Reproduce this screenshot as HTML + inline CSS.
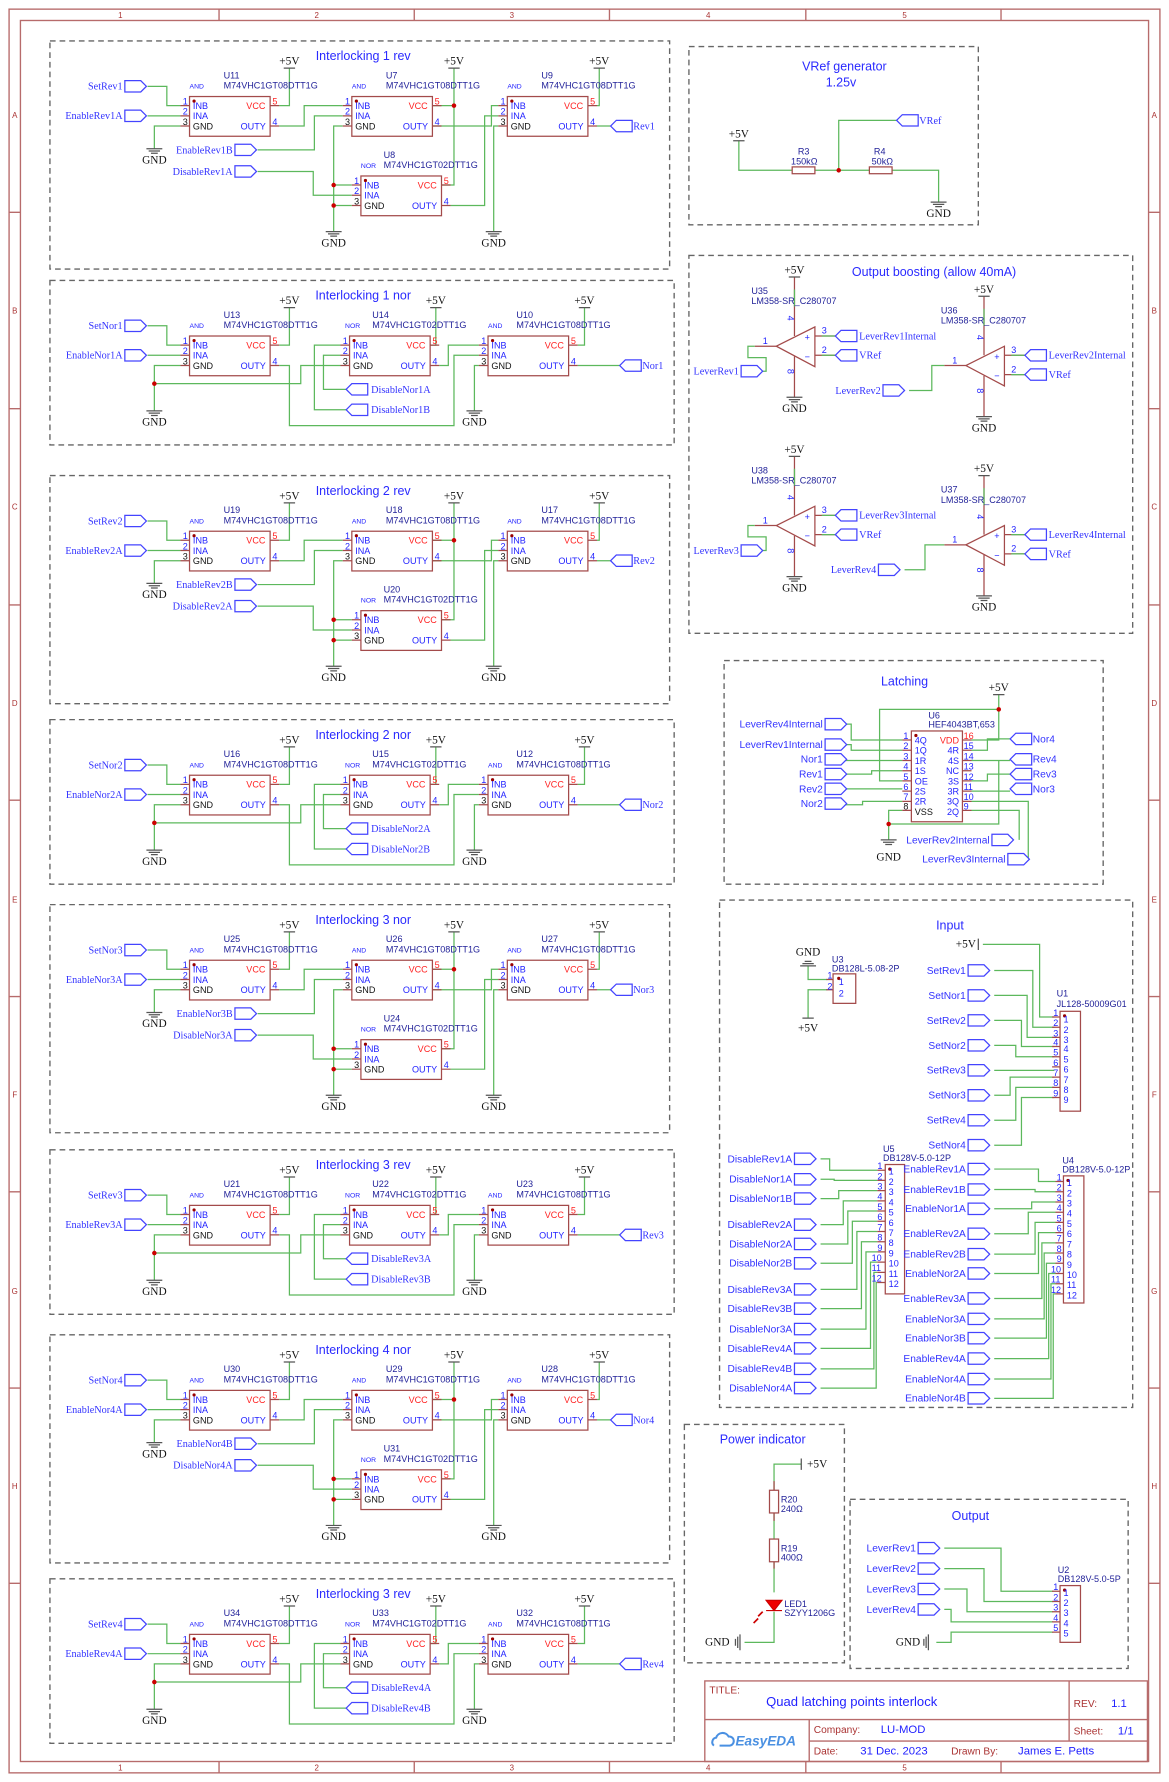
<!DOCTYPE html>
<html><head><meta charset="utf-8"><style>
html,body{margin:0;padding:0;background:#fff}
svg{display:block}
.w{fill:none;stroke:#5cb85c;stroke-width:1.1}
.bx{fill:#fff;stroke:#a34a4a;stroke-width:1.1}
.pn{fill:none;stroke:#a34a4a;stroke-width:1.1}
.ds{fill:none;stroke:#666;stroke-width:1.2;stroke-dasharray:5 3.5}
.fl{fill:#fff;stroke:#44f;stroke-width:1.1}
.sy{fill:none;stroke:#555;stroke-width:1.1}
text{font-family:"Liberation Sans",sans-serif}
.n{font-size:8px;fill:#22f}
.f{font-size:8px;fill:#22f}
.p{font-size:8px;fill:#229}
.t{font-size:6px;fill:#22f}
.ti{font-size:11px;fill:#2a2aff;text-anchor:middle}
.lb{font-family:"Liberation Serif",serif;font-size:9px;fill:#33f}
.e{text-anchor:end}
.m{text-anchor:middle}
.pw{font-family:"Liberation Serif",serif;font-size:10px;fill:#111;text-anchor:middle}
.dt{fill:#c00}
.fr{fill:none;stroke:#b76b6b;stroke-width:1.2}
.rl{font-size:7px;fill:#a33;text-anchor:middle}
.tb{font-size:9px;fill:#a33}
.tv{font-size:10px;fill:#22f}
text.r,g text.r{fill:#f22}
text.k,g text.k{fill:#111}
</style></head><body>
<svg width="1169" height="1782" viewBox="0 0 1030 1570" xmlns="http://www.w3.org/2000/svg">
<!-- frame -->
<rect class="fr" x="8" y="8" width="1014" height="1554"/>
<rect class="fr" x="18" y="18" width="994" height="1534"/>
<path class="fr" d="M193 8V18M365 8V18M537 8V18M710 8V18M882 8V18M193 1552V1562M365 1552V1562M537 1552V1562M710 1552V1562M882 1552V1562M8 187H18M8 360H18M8 533H18M8 705H18M8 878H18M8 1050H18M8 1223H18M8 1395H18M1012 187H1022M1012 360H1022M1012 533H1022M1012 705H1022M1012 878H1022M1012 1050H1022M1012 1223H1022M1012 1395H1022"/>
<g class="rl"><text x="106" y="16">1</text><text x="279" y="16">2</text><text x="451" y="16">3</text><text x="624" y="16">4</text><text x="797" y="16">5</text>
<text x="106" y="1560">1</text><text x="279" y="1560">2</text><text x="451" y="1560">3</text><text x="624" y="1560">4</text><text x="797" y="1560">5</text>
<text x="13" y="104">A</text><text x="13" y="276">B</text><text x="13" y="449">C</text><text x="13" y="622">D</text><text x="13" y="795">E</text><text x="13" y="967">F</text><text x="13" y="1140">G</text><text x="13" y="1312">H</text>
<text x="1017" y="104">A</text><text x="1017" y="276">B</text><text x="1017" y="449">C</text><text x="1017" y="622">D</text><text x="1017" y="795">E</text><text x="1017" y="967">F</text><text x="1017" y="1140">G</text><text x="1017" y="1312">H</text></g>

<!-- ========== REV BLOCK 1 ========== -->
<g transform="translate(0,36)">
<rect class="ds" x="44" y="0" width="546" height="201"/>
<text class="ti" x="320" y="17">Interlocking 1 rev</text>
<path class="w" d="M130 40H147V57H159M130 66H159M159 75H136V95M246 57H255V24M246 75H268V57H302M227 96H277V66H302M302 75H294V168M381 57H400V24M400 57V127H389M381 75H433V57H439M227 115H276V136H310M310 127H294M310 145H294M397 145H427V66H439M439 75H435V168M526 57H528V24M526 75H538"/>
<circle class="dt" cx="400" cy="57" r="2"/><circle class="dt" cx="294" cy="127" r="2"/><circle class="dt" cx="294" cy="145" r="2"/>
<path class="fl" d="M110 35h14l5 5l-5 5h-14zM110 61h14l5 5l-5 5h-14zM207 91h14l5 5l-5 5h-14zM207 110h14l5 5l-5 5h-14zM538 75l5-5h14v10h-14z"/>
<text class="lb e" x="108" y="43">SetRev1</text><text class="lb e" x="108" y="69">EnableRev1A</text><text class="lb e" x="205" y="99">EnableRev1B</text><text class="lb e" x="205" y="118">DisableRev1A</text><text class="lb" x="558" y="78">Rev1</text>
<path class="sy" d="M250 24h10M395 24h10M523 24h10M129 95h14M131 97h10M133 99h6M287 168h14M289 170h10M291 172h6M428 168h14M430 170h10M432 172h6"/>
<text class="pw" x="255" y="21">+5V</text><text class="pw" x="400" y="21">+5V</text><text class="pw" x="528" y="21">+5V</text>
<text class="pw" x="136" y="108">GND</text><text class="pw" x="294" y="181">GND</text><text class="pw" x="435" y="181">GND</text>
<g transform="translate(167,49)"><rect class="bx" width="71" height="35"/><circle cx="4" cy="4" r="1.4" fill="#900"/><path class="pn" d="M-8 8h8M-8 17h8M-8 26h8M71 8h8M71 26h8"/><text class="n" x="-6" y="7">1</text><text class="n" x="-6" y="16">2</text><text class="n k" x="-6" y="25">3</text><text class="n r" x="73" y="7">5</text><text class="n" x="73" y="25">4</text><text class="f" x="3" y="11">INB</text><text class="f" x="3" y="20">INA</text><text class="f k" x="3" y="29">GND</text><text class="f r" x="50" y="11">VCC</text><text class="f" x="45" y="29">OUTY</text><text class="t" x="0" y="-7">AND</text><text class="p" x="30" y="-16">U11</text><text class="p" x="30" y="-7">M74VHC1GT08DTT1G</text></g>
<g transform="translate(310,49)"><rect class="bx" width="71" height="35"/><circle cx="4" cy="4" r="1.4" fill="#900"/><path class="pn" d="M-8 8h8M-8 17h8M-8 26h8M71 8h8M71 26h8"/><text class="n" x="-6" y="7">1</text><text class="n" x="-6" y="16">2</text><text class="n k" x="-6" y="25">3</text><text class="n r" x="73" y="7">5</text><text class="n" x="73" y="25">4</text><text class="f" x="3" y="11">INB</text><text class="f" x="3" y="20">INA</text><text class="f k" x="3" y="29">GND</text><text class="f r" x="50" y="11">VCC</text><text class="f" x="45" y="29">OUTY</text><text class="t" x="0" y="-7">AND</text><text class="p" x="30" y="-16">U7</text><text class="p" x="30" y="-7">M74VHC1GT08DTT1G</text></g>
<g transform="translate(447,49)"><rect class="bx" width="71" height="35"/><circle cx="4" cy="4" r="1.4" fill="#900"/><path class="pn" d="M-8 8h8M-8 17h8M-8 26h8M71 8h8M71 26h8"/><text class="n" x="-6" y="7">1</text><text class="n" x="-6" y="16">2</text><text class="n k" x="-6" y="25">3</text><text class="n r" x="73" y="7">5</text><text class="n" x="73" y="25">4</text><text class="f" x="3" y="11">INB</text><text class="f" x="3" y="20">INA</text><text class="f k" x="3" y="29">GND</text><text class="f r" x="50" y="11">VCC</text><text class="f" x="45" y="29">OUTY</text><text class="t" x="0" y="-7">AND</text><text class="p" x="30" y="-16">U9</text><text class="p" x="30" y="-7">M74VHC1GT08DTT1G</text></g>
<g transform="translate(318,119)"><rect class="bx" width="71" height="35"/><circle cx="4" cy="4" r="1.4" fill="#900"/><path class="pn" d="M-8 8h8M-8 17h8M-8 26h8M71 8h8M71 26h8"/><text class="n" x="-6" y="7">1</text><text class="n" x="-6" y="16">2</text><text class="n k" x="-6" y="25">3</text><text class="n r" x="73" y="7">5</text><text class="n" x="73" y="25">4</text><text class="f" x="3" y="11">INB</text><text class="f" x="3" y="20">INA</text><text class="f k" x="3" y="29">GND</text><text class="f r" x="50" y="11">VCC</text><text class="f" x="45" y="29">OUTY</text><text class="t" x="0" y="-7">NOR</text><text class="p" x="20" y="-16">U8</text><text class="p" x="20" y="-7">M74VHC1GT02DTT1G</text></g>
</g>

<!-- ========== NOR BLOCK 2 ========== -->
<g transform="translate(0,247)">
<rect class="ds" x="44" y="0" width="550" height="145"/>
<text class="ti" x="320" y="17">Interlocking 1 nor</text>
<path class="w" d="M130 40H147V57H159M130 66H159M159 75H136V115M136 91H265V75H300M246 57H255V24M246 75H255V128H400V66H422M300 57H277V114H305M300 66H285V96H305M379 57H384V24M387 75H395V57H422M422 75H418V115M509 57H515V24M509 75H546"/>
<circle class="dt" cx="136" cy="91" r="2"/>
<path class="fl" d="M110 35h14l5 5l-5 5h-14zM110 61h14l5 5l-5 5h-14zM305 96l5-5h14v10h-14zM305 114l5-5h14v10h-14zM546 75l5-5h14v10h-14z"/>
<text class="lb e" x="108" y="43">SetNor1</text><text class="lb e" x="108" y="69">EnableNor1A</text><text class="lb" x="327" y="99">DisableNor1A</text><text class="lb" x="327" y="117">DisableNor1B</text><text class="lb" x="566" y="78">Nor1</text>
<path class="sy" d="M250 24h10M379 24h10M510 24h10M129 115h14M131 117h10M133 119h6M411 115h14M413 117h10M415 119h6"/>
<text class="pw" x="255" y="21">+5V</text><text class="pw" x="384" y="21">+5V</text><text class="pw" x="515" y="21">+5V</text>
<text class="pw" x="136" y="128">GND</text><text class="pw" x="418" y="128">GND</text>
<g transform="translate(167,49)"><rect class="bx" width="71" height="35"/><circle cx="4" cy="4" r="1.4" fill="#900"/><path class="pn" d="M-8 8h8M-8 17h8M-8 26h8M71 8h8M71 26h8"/><text class="n" x="-6" y="7">1</text><text class="n" x="-6" y="16">2</text><text class="n k" x="-6" y="25">3</text><text class="n r" x="73" y="7">5</text><text class="n" x="73" y="25">4</text><text class="f" x="3" y="11">INB</text><text class="f" x="3" y="20">INA</text><text class="f k" x="3" y="29">GND</text><text class="f r" x="50" y="11">VCC</text><text class="f" x="45" y="29">OUTY</text><text class="t" x="0" y="-7">AND</text><text class="p" x="30" y="-16">U13</text><text class="p" x="30" y="-7">M74VHC1GT08DTT1G</text></g>
<g transform="translate(308,49)"><rect class="bx" width="71" height="35"/><circle cx="4" cy="4" r="1.4" fill="#900"/><path class="pn" d="M-8 8h8M-8 17h8M-8 26h8M71 8h8M71 26h8"/><text class="n" x="-6" y="7">1</text><text class="n" x="-6" y="16">2</text><text class="n k" x="-6" y="25">3</text><text class="n r" x="73" y="7">5</text><text class="n" x="73" y="25">4</text><text class="f" x="3" y="11">INB</text><text class="f" x="3" y="20">INA</text><text class="f k" x="3" y="29">GND</text><text class="f r" x="50" y="11">VCC</text><text class="f" x="45" y="29">OUTY</text><text class="t" x="-4" y="-7">NOR</text><text class="p" x="20" y="-16">U14</text><text class="p" x="20" y="-7">M74VHC1GT02DTT1G</text></g>
<g transform="translate(430,49)"><rect class="bx" width="71" height="35"/><circle cx="4" cy="4" r="1.4" fill="#900"/><path class="pn" d="M-8 8h8M-8 17h8M-8 26h8M71 8h8M71 26h8"/><text class="n" x="-6" y="7">1</text><text class="n" x="-6" y="16">2</text><text class="n k" x="-6" y="25">3</text><text class="n r" x="73" y="7">5</text><text class="n" x="73" y="25">4</text><text class="f" x="3" y="11">INB</text><text class="f" x="3" y="20">INA</text><text class="f k" x="3" y="29">GND</text><text class="f r" x="50" y="11">VCC</text><text class="f" x="45" y="29">OUTY</text><text class="t" x="0" y="-7">AND</text><text class="p" x="25" y="-16">U10</text><text class="p" x="25" y="-7">M74VHC1GT08DTT1G</text></g>
</g>

<!-- ========== REV BLOCK 3 ========== -->
<g transform="translate(0,419)">
<rect class="ds" x="44" y="0" width="546" height="201"/>
<text class="ti" x="320" y="17">Interlocking 2 rev</text>
<path class="w" d="M130 40H147V57H159M130 66H159M159 75H136V95M246 57H255V24M246 75H268V57H302M227 96H277V66H302M302 75H294V168M381 57H400V24M400 57V127H389M381 75H433V57H439M227 115H276V136H310M310 127H294M310 145H294M397 145H427V66H439M439 75H435V168M526 57H528V24M526 75H538"/>
<circle class="dt" cx="400" cy="57" r="2"/><circle class="dt" cx="294" cy="127" r="2"/><circle class="dt" cx="294" cy="145" r="2"/>
<path class="fl" d="M110 35h14l5 5l-5 5h-14zM110 61h14l5 5l-5 5h-14zM207 91h14l5 5l-5 5h-14zM207 110h14l5 5l-5 5h-14zM538 75l5-5h14v10h-14z"/>
<text class="lb e" x="108" y="43">SetRev2</text><text class="lb e" x="108" y="69">EnableRev2A</text><text class="lb e" x="205" y="99">EnableRev2B</text><text class="lb e" x="205" y="118">DisableRev2A</text><text class="lb" x="558" y="78">Rev2</text>
<path class="sy" d="M250 24h10M395 24h10M523 24h10M129 95h14M131 97h10M133 99h6M287 168h14M289 170h10M291 172h6M428 168h14M430 170h10M432 172h6"/>
<text class="pw" x="255" y="21">+5V</text><text class="pw" x="400" y="21">+5V</text><text class="pw" x="528" y="21">+5V</text>
<text class="pw" x="136" y="108">GND</text><text class="pw" x="294" y="181">GND</text><text class="pw" x="435" y="181">GND</text>
<g transform="translate(167,49)"><rect class="bx" width="71" height="35"/><circle cx="4" cy="4" r="1.4" fill="#900"/><path class="pn" d="M-8 8h8M-8 17h8M-8 26h8M71 8h8M71 26h8"/><text class="n" x="-6" y="7">1</text><text class="n" x="-6" y="16">2</text><text class="n k" x="-6" y="25">3</text><text class="n r" x="73" y="7">5</text><text class="n" x="73" y="25">4</text><text class="f" x="3" y="11">INB</text><text class="f" x="3" y="20">INA</text><text class="f k" x="3" y="29">GND</text><text class="f r" x="50" y="11">VCC</text><text class="f" x="45" y="29">OUTY</text><text class="t" x="0" y="-7">AND</text><text class="p" x="30" y="-16">U19</text><text class="p" x="30" y="-7">M74VHC1GT08DTT1G</text></g>
<g transform="translate(310,49)"><rect class="bx" width="71" height="35"/><circle cx="4" cy="4" r="1.4" fill="#900"/><path class="pn" d="M-8 8h8M-8 17h8M-8 26h8M71 8h8M71 26h8"/><text class="n" x="-6" y="7">1</text><text class="n" x="-6" y="16">2</text><text class="n k" x="-6" y="25">3</text><text class="n r" x="73" y="7">5</text><text class="n" x="73" y="25">4</text><text class="f" x="3" y="11">INB</text><text class="f" x="3" y="20">INA</text><text class="f k" x="3" y="29">GND</text><text class="f r" x="50" y="11">VCC</text><text class="f" x="45" y="29">OUTY</text><text class="t" x="0" y="-7">AND</text><text class="p" x="30" y="-16">U18</text><text class="p" x="30" y="-7">M74VHC1GT08DTT1G</text></g>
<g transform="translate(447,49)"><rect class="bx" width="71" height="35"/><circle cx="4" cy="4" r="1.4" fill="#900"/><path class="pn" d="M-8 8h8M-8 17h8M-8 26h8M71 8h8M71 26h8"/><text class="n" x="-6" y="7">1</text><text class="n" x="-6" y="16">2</text><text class="n k" x="-6" y="25">3</text><text class="n r" x="73" y="7">5</text><text class="n" x="73" y="25">4</text><text class="f" x="3" y="11">INB</text><text class="f" x="3" y="20">INA</text><text class="f k" x="3" y="29">GND</text><text class="f r" x="50" y="11">VCC</text><text class="f" x="45" y="29">OUTY</text><text class="t" x="0" y="-7">AND</text><text class="p" x="30" y="-16">U17</text><text class="p" x="30" y="-7">M74VHC1GT08DTT1G</text></g>
<g transform="translate(318,119)"><rect class="bx" width="71" height="35"/><circle cx="4" cy="4" r="1.4" fill="#900"/><path class="pn" d="M-8 8h8M-8 17h8M-8 26h8M71 8h8M71 26h8"/><text class="n" x="-6" y="7">1</text><text class="n" x="-6" y="16">2</text><text class="n k" x="-6" y="25">3</text><text class="n r" x="73" y="7">5</text><text class="n" x="73" y="25">4</text><text class="f" x="3" y="11">INB</text><text class="f" x="3" y="20">INA</text><text class="f k" x="3" y="29">GND</text><text class="f r" x="50" y="11">VCC</text><text class="f" x="45" y="29">OUTY</text><text class="t" x="0" y="-7">NOR</text><text class="p" x="20" y="-16">U20</text><text class="p" x="20" y="-7">M74VHC1GT02DTT1G</text></g>
</g>

<!-- ========== NOR BLOCK 4 ========== -->
<g transform="translate(0,634)">
<rect class="ds" x="44" y="0" width="550" height="145"/>
<text class="ti" x="320" y="17">Interlocking 2 nor</text>
<path class="w" d="M130 40H147V57H159M130 66H159M159 75H136V115M136 91H265V75H300M246 57H255V24M246 75H255V128H400V66H422M300 57H277V114H305M300 66H285V96H305M379 57H384V24M387 75H395V57H422M422 75H418V115M509 57H515V24M509 75H546"/>
<circle class="dt" cx="136" cy="91" r="2"/>
<path class="fl" d="M110 35h14l5 5l-5 5h-14zM110 61h14l5 5l-5 5h-14zM305 96l5-5h14v10h-14zM305 114l5-5h14v10h-14zM546 75l5-5h14v10h-14z"/>
<text class="lb e" x="108" y="43">SetNor2</text><text class="lb e" x="108" y="69">EnableNor2A</text><text class="lb" x="327" y="99">DisableNor2A</text><text class="lb" x="327" y="117">DisableNor2B</text><text class="lb" x="566" y="78">Nor2</text>
<path class="sy" d="M250 24h10M379 24h10M510 24h10M129 115h14M131 117h10M133 119h6M411 115h14M413 117h10M415 119h6"/>
<text class="pw" x="255" y="21">+5V</text><text class="pw" x="384" y="21">+5V</text><text class="pw" x="515" y="21">+5V</text>
<text class="pw" x="136" y="128">GND</text><text class="pw" x="418" y="128">GND</text>
<g transform="translate(167,49)"><rect class="bx" width="71" height="35"/><circle cx="4" cy="4" r="1.4" fill="#900"/><path class="pn" d="M-8 8h8M-8 17h8M-8 26h8M71 8h8M71 26h8"/><text class="n" x="-6" y="7">1</text><text class="n" x="-6" y="16">2</text><text class="n k" x="-6" y="25">3</text><text class="n r" x="73" y="7">5</text><text class="n" x="73" y="25">4</text><text class="f" x="3" y="11">INB</text><text class="f" x="3" y="20">INA</text><text class="f k" x="3" y="29">GND</text><text class="f r" x="50" y="11">VCC</text><text class="f" x="45" y="29">OUTY</text><text class="t" x="0" y="-7">AND</text><text class="p" x="30" y="-16">U16</text><text class="p" x="30" y="-7">M74VHC1GT08DTT1G</text></g>
<g transform="translate(308,49)"><rect class="bx" width="71" height="35"/><circle cx="4" cy="4" r="1.4" fill="#900"/><path class="pn" d="M-8 8h8M-8 17h8M-8 26h8M71 8h8M71 26h8"/><text class="n" x="-6" y="7">1</text><text class="n" x="-6" y="16">2</text><text class="n k" x="-6" y="25">3</text><text class="n r" x="73" y="7">5</text><text class="n" x="73" y="25">4</text><text class="f" x="3" y="11">INB</text><text class="f" x="3" y="20">INA</text><text class="f k" x="3" y="29">GND</text><text class="f r" x="50" y="11">VCC</text><text class="f" x="45" y="29">OUTY</text><text class="t" x="-4" y="-7">NOR</text><text class="p" x="20" y="-16">U15</text><text class="p" x="20" y="-7">M74VHC1GT02DTT1G</text></g>
<g transform="translate(430,49)"><rect class="bx" width="71" height="35"/><circle cx="4" cy="4" r="1.4" fill="#900"/><path class="pn" d="M-8 8h8M-8 17h8M-8 26h8M71 8h8M71 26h8"/><text class="n" x="-6" y="7">1</text><text class="n" x="-6" y="16">2</text><text class="n k" x="-6" y="25">3</text><text class="n r" x="73" y="7">5</text><text class="n" x="73" y="25">4</text><text class="f" x="3" y="11">INB</text><text class="f" x="3" y="20">INA</text><text class="f k" x="3" y="29">GND</text><text class="f r" x="50" y="11">VCC</text><text class="f" x="45" y="29">OUTY</text><text class="t" x="0" y="-7">AND</text><text class="p" x="25" y="-16">U12</text><text class="p" x="25" y="-7">M74VHC1GT08DTT1G</text></g>
</g>

<!-- ========== REV BLOCK 5 ========== -->
<g transform="translate(0,797)">
<rect class="ds" x="44" y="0" width="546" height="201"/>
<text class="ti" x="320" y="17">Interlocking 3 nor</text>
<path class="w" d="M130 40H147V57H159M130 66H159M159 75H136V95M246 57H255V24M246 75H268V57H302M227 96H277V66H302M302 75H294V168M381 57H400V24M400 57V127H389M381 75H433V57H439M227 115H276V136H310M310 127H294M310 145H294M397 145H427V66H439M439 75H435V168M526 57H528V24M526 75H538"/>
<circle class="dt" cx="400" cy="57" r="2"/><circle class="dt" cx="294" cy="127" r="2"/><circle class="dt" cx="294" cy="145" r="2"/>
<path class="fl" d="M110 35h14l5 5l-5 5h-14zM110 61h14l5 5l-5 5h-14zM207 91h14l5 5l-5 5h-14zM207 110h14l5 5l-5 5h-14zM538 75l5-5h14v10h-14z"/>
<text class="lb e" x="108" y="43">SetNor3</text><text class="lb e" x="108" y="69">EnableNor3A</text><text class="lb e" x="205" y="99">EnableNor3B</text><text class="lb e" x="205" y="118">DisableNor3A</text><text class="lb" x="558" y="78">Nor3</text>
<path class="sy" d="M250 24h10M395 24h10M523 24h10M129 95h14M131 97h10M133 99h6M287 168h14M289 170h10M291 172h6M428 168h14M430 170h10M432 172h6"/>
<text class="pw" x="255" y="21">+5V</text><text class="pw" x="400" y="21">+5V</text><text class="pw" x="528" y="21">+5V</text>
<text class="pw" x="136" y="108">GND</text><text class="pw" x="294" y="181">GND</text><text class="pw" x="435" y="181">GND</text>
<g transform="translate(167,49)"><rect class="bx" width="71" height="35"/><circle cx="4" cy="4" r="1.4" fill="#900"/><path class="pn" d="M-8 8h8M-8 17h8M-8 26h8M71 8h8M71 26h8"/><text class="n" x="-6" y="7">1</text><text class="n" x="-6" y="16">2</text><text class="n k" x="-6" y="25">3</text><text class="n r" x="73" y="7">5</text><text class="n" x="73" y="25">4</text><text class="f" x="3" y="11">INB</text><text class="f" x="3" y="20">INA</text><text class="f k" x="3" y="29">GND</text><text class="f r" x="50" y="11">VCC</text><text class="f" x="45" y="29">OUTY</text><text class="t" x="0" y="-7">AND</text><text class="p" x="30" y="-16">U25</text><text class="p" x="30" y="-7">M74VHC1GT08DTT1G</text></g>
<g transform="translate(310,49)"><rect class="bx" width="71" height="35"/><circle cx="4" cy="4" r="1.4" fill="#900"/><path class="pn" d="M-8 8h8M-8 17h8M-8 26h8M71 8h8M71 26h8"/><text class="n" x="-6" y="7">1</text><text class="n" x="-6" y="16">2</text><text class="n k" x="-6" y="25">3</text><text class="n r" x="73" y="7">5</text><text class="n" x="73" y="25">4</text><text class="f" x="3" y="11">INB</text><text class="f" x="3" y="20">INA</text><text class="f k" x="3" y="29">GND</text><text class="f r" x="50" y="11">VCC</text><text class="f" x="45" y="29">OUTY</text><text class="t" x="0" y="-7">AND</text><text class="p" x="30" y="-16">U26</text><text class="p" x="30" y="-7">M74VHC1GT08DTT1G</text></g>
<g transform="translate(447,49)"><rect class="bx" width="71" height="35"/><circle cx="4" cy="4" r="1.4" fill="#900"/><path class="pn" d="M-8 8h8M-8 17h8M-8 26h8M71 8h8M71 26h8"/><text class="n" x="-6" y="7">1</text><text class="n" x="-6" y="16">2</text><text class="n k" x="-6" y="25">3</text><text class="n r" x="73" y="7">5</text><text class="n" x="73" y="25">4</text><text class="f" x="3" y="11">INB</text><text class="f" x="3" y="20">INA</text><text class="f k" x="3" y="29">GND</text><text class="f r" x="50" y="11">VCC</text><text class="f" x="45" y="29">OUTY</text><text class="t" x="0" y="-7">AND</text><text class="p" x="30" y="-16">U27</text><text class="p" x="30" y="-7">M74VHC1GT08DTT1G</text></g>
<g transform="translate(318,119)"><rect class="bx" width="71" height="35"/><circle cx="4" cy="4" r="1.4" fill="#900"/><path class="pn" d="M-8 8h8M-8 17h8M-8 26h8M71 8h8M71 26h8"/><text class="n" x="-6" y="7">1</text><text class="n" x="-6" y="16">2</text><text class="n k" x="-6" y="25">3</text><text class="n r" x="73" y="7">5</text><text class="n" x="73" y="25">4</text><text class="f" x="3" y="11">INB</text><text class="f" x="3" y="20">INA</text><text class="f k" x="3" y="29">GND</text><text class="f r" x="50" y="11">VCC</text><text class="f" x="45" y="29">OUTY</text><text class="t" x="0" y="-7">NOR</text><text class="p" x="20" y="-16">U24</text><text class="p" x="20" y="-7">M74VHC1GT02DTT1G</text></g>
</g>

<!-- ========== NOR BLOCK 6 ========== -->
<g transform="translate(0,1013)">
<rect class="ds" x="44" y="0" width="550" height="145"/>
<text class="ti" x="320" y="17">Interlocking 3 rev</text>
<path class="w" d="M130 40H147V57H159M130 66H159M159 75H136V115M136 91H265V75H300M246 57H255V24M246 75H255V128H400V66H422M300 57H277V114H305M300 66H285V96H305M379 57H384V24M387 75H395V57H422M422 75H418V115M509 57H515V24M509 75H546"/>
<circle class="dt" cx="136" cy="91" r="2"/>
<path class="fl" d="M110 35h14l5 5l-5 5h-14zM110 61h14l5 5l-5 5h-14zM305 96l5-5h14v10h-14zM305 114l5-5h14v10h-14zM546 75l5-5h14v10h-14z"/>
<text class="lb e" x="108" y="43">SetRev3</text><text class="lb e" x="108" y="69">EnableRev3A</text><text class="lb" x="327" y="99">DisableRev3A</text><text class="lb" x="327" y="117">DisableRev3B</text><text class="lb" x="566" y="78">Rev3</text>
<path class="sy" d="M250 24h10M379 24h10M510 24h10M129 115h14M131 117h10M133 119h6M411 115h14M413 117h10M415 119h6"/>
<text class="pw" x="255" y="21">+5V</text><text class="pw" x="384" y="21">+5V</text><text class="pw" x="515" y="21">+5V</text>
<text class="pw" x="136" y="128">GND</text><text class="pw" x="418" y="128">GND</text>
<g transform="translate(167,49)"><rect class="bx" width="71" height="35"/><circle cx="4" cy="4" r="1.4" fill="#900"/><path class="pn" d="M-8 8h8M-8 17h8M-8 26h8M71 8h8M71 26h8"/><text class="n" x="-6" y="7">1</text><text class="n" x="-6" y="16">2</text><text class="n k" x="-6" y="25">3</text><text class="n r" x="73" y="7">5</text><text class="n" x="73" y="25">4</text><text class="f" x="3" y="11">INB</text><text class="f" x="3" y="20">INA</text><text class="f k" x="3" y="29">GND</text><text class="f r" x="50" y="11">VCC</text><text class="f" x="45" y="29">OUTY</text><text class="t" x="0" y="-7">AND</text><text class="p" x="30" y="-16">U21</text><text class="p" x="30" y="-7">M74VHC1GT08DTT1G</text></g>
<g transform="translate(308,49)"><rect class="bx" width="71" height="35"/><circle cx="4" cy="4" r="1.4" fill="#900"/><path class="pn" d="M-8 8h8M-8 17h8M-8 26h8M71 8h8M71 26h8"/><text class="n" x="-6" y="7">1</text><text class="n" x="-6" y="16">2</text><text class="n k" x="-6" y="25">3</text><text class="n r" x="73" y="7">5</text><text class="n" x="73" y="25">4</text><text class="f" x="3" y="11">INB</text><text class="f" x="3" y="20">INA</text><text class="f k" x="3" y="29">GND</text><text class="f r" x="50" y="11">VCC</text><text class="f" x="45" y="29">OUTY</text><text class="t" x="-4" y="-7">NOR</text><text class="p" x="20" y="-16">U22</text><text class="p" x="20" y="-7">M74VHC1GT02DTT1G</text></g>
<g transform="translate(430,49)"><rect class="bx" width="71" height="35"/><circle cx="4" cy="4" r="1.4" fill="#900"/><path class="pn" d="M-8 8h8M-8 17h8M-8 26h8M71 8h8M71 26h8"/><text class="n" x="-6" y="7">1</text><text class="n" x="-6" y="16">2</text><text class="n k" x="-6" y="25">3</text><text class="n r" x="73" y="7">5</text><text class="n" x="73" y="25">4</text><text class="f" x="3" y="11">INB</text><text class="f" x="3" y="20">INA</text><text class="f k" x="3" y="29">GND</text><text class="f r" x="50" y="11">VCC</text><text class="f" x="45" y="29">OUTY</text><text class="t" x="0" y="-7">AND</text><text class="p" x="25" y="-16">U23</text><text class="p" x="25" y="-7">M74VHC1GT08DTT1G</text></g>
</g>

<!-- ========== REV BLOCK 7 ========== -->
<g transform="translate(0,1176)">
<rect class="ds" x="44" y="0" width="546" height="201"/>
<text class="ti" x="320" y="17">Interlocking 4 nor</text>
<path class="w" d="M130 40H147V57H159M130 66H159M159 75H136V95M246 57H255V24M246 75H268V57H302M227 96H277V66H302M302 75H294V168M381 57H400V24M400 57V127H389M381 75H433V57H439M227 115H276V136H310M310 127H294M310 145H294M397 145H427V66H439M439 75H435V168M526 57H528V24M526 75H538"/>
<circle class="dt" cx="400" cy="57" r="2"/><circle class="dt" cx="294" cy="127" r="2"/><circle class="dt" cx="294" cy="145" r="2"/>
<path class="fl" d="M110 35h14l5 5l-5 5h-14zM110 61h14l5 5l-5 5h-14zM207 91h14l5 5l-5 5h-14zM207 110h14l5 5l-5 5h-14zM538 75l5-5h14v10h-14z"/>
<text class="lb e" x="108" y="43">SetNor4</text><text class="lb e" x="108" y="69">EnableNor4A</text><text class="lb e" x="205" y="99">EnableNor4B</text><text class="lb e" x="205" y="118">DisableNor4A</text><text class="lb" x="558" y="78">Nor4</text>
<path class="sy" d="M250 24h10M395 24h10M523 24h10M129 95h14M131 97h10M133 99h6M287 168h14M289 170h10M291 172h6M428 168h14M430 170h10M432 172h6"/>
<text class="pw" x="255" y="21">+5V</text><text class="pw" x="400" y="21">+5V</text><text class="pw" x="528" y="21">+5V</text>
<text class="pw" x="136" y="108">GND</text><text class="pw" x="294" y="181">GND</text><text class="pw" x="435" y="181">GND</text>
<g transform="translate(167,49)"><rect class="bx" width="71" height="35"/><circle cx="4" cy="4" r="1.4" fill="#900"/><path class="pn" d="M-8 8h8M-8 17h8M-8 26h8M71 8h8M71 26h8"/><text class="n" x="-6" y="7">1</text><text class="n" x="-6" y="16">2</text><text class="n k" x="-6" y="25">3</text><text class="n r" x="73" y="7">5</text><text class="n" x="73" y="25">4</text><text class="f" x="3" y="11">INB</text><text class="f" x="3" y="20">INA</text><text class="f k" x="3" y="29">GND</text><text class="f r" x="50" y="11">VCC</text><text class="f" x="45" y="29">OUTY</text><text class="t" x="0" y="-7">AND</text><text class="p" x="30" y="-16">U30</text><text class="p" x="30" y="-7">M74VHC1GT08DTT1G</text></g>
<g transform="translate(310,49)"><rect class="bx" width="71" height="35"/><circle cx="4" cy="4" r="1.4" fill="#900"/><path class="pn" d="M-8 8h8M-8 17h8M-8 26h8M71 8h8M71 26h8"/><text class="n" x="-6" y="7">1</text><text class="n" x="-6" y="16">2</text><text class="n k" x="-6" y="25">3</text><text class="n r" x="73" y="7">5</text><text class="n" x="73" y="25">4</text><text class="f" x="3" y="11">INB</text><text class="f" x="3" y="20">INA</text><text class="f k" x="3" y="29">GND</text><text class="f r" x="50" y="11">VCC</text><text class="f" x="45" y="29">OUTY</text><text class="t" x="0" y="-7">AND</text><text class="p" x="30" y="-16">U29</text><text class="p" x="30" y="-7">M74VHC1GT08DTT1G</text></g>
<g transform="translate(447,49)"><rect class="bx" width="71" height="35"/><circle cx="4" cy="4" r="1.4" fill="#900"/><path class="pn" d="M-8 8h8M-8 17h8M-8 26h8M71 8h8M71 26h8"/><text class="n" x="-6" y="7">1</text><text class="n" x="-6" y="16">2</text><text class="n k" x="-6" y="25">3</text><text class="n r" x="73" y="7">5</text><text class="n" x="73" y="25">4</text><text class="f" x="3" y="11">INB</text><text class="f" x="3" y="20">INA</text><text class="f k" x="3" y="29">GND</text><text class="f r" x="50" y="11">VCC</text><text class="f" x="45" y="29">OUTY</text><text class="t" x="0" y="-7">AND</text><text class="p" x="30" y="-16">U28</text><text class="p" x="30" y="-7">M74VHC1GT08DTT1G</text></g>
<g transform="translate(318,119)"><rect class="bx" width="71" height="35"/><circle cx="4" cy="4" r="1.4" fill="#900"/><path class="pn" d="M-8 8h8M-8 17h8M-8 26h8M71 8h8M71 26h8"/><text class="n" x="-6" y="7">1</text><text class="n" x="-6" y="16">2</text><text class="n k" x="-6" y="25">3</text><text class="n r" x="73" y="7">5</text><text class="n" x="73" y="25">4</text><text class="f" x="3" y="11">INB</text><text class="f" x="3" y="20">INA</text><text class="f k" x="3" y="29">GND</text><text class="f r" x="50" y="11">VCC</text><text class="f" x="45" y="29">OUTY</text><text class="t" x="0" y="-7">NOR</text><text class="p" x="20" y="-16">U31</text><text class="p" x="20" y="-7">M74VHC1GT02DTT1G</text></g>
</g>

<!-- ========== NOR BLOCK 8 ========== -->
<g transform="translate(0,1391)">
<rect class="ds" x="44" y="0" width="550" height="145"/>
<text class="ti" x="320" y="17">Interlocking 3 rev</text>
<path class="w" d="M130 40H147V57H159M130 66H159M159 75H136V115M136 91H265V75H300M246 57H255V24M246 75H255V128H400V66H422M300 57H277V114H305M300 66H285V96H305M379 57H384V24M387 75H395V57H422M422 75H418V115M509 57H515V24M509 75H546"/>
<circle class="dt" cx="136" cy="91" r="2"/>
<path class="fl" d="M110 35h14l5 5l-5 5h-14zM110 61h14l5 5l-5 5h-14zM305 96l5-5h14v10h-14zM305 114l5-5h14v10h-14zM546 75l5-5h14v10h-14z"/>
<text class="lb e" x="108" y="43">SetRev4</text><text class="lb e" x="108" y="69">EnableRev4A</text><text class="lb" x="327" y="99">DisableRev4A</text><text class="lb" x="327" y="117">DisableRev4B</text><text class="lb" x="566" y="78">Rev4</text>
<path class="sy" d="M250 24h10M379 24h10M510 24h10M129 115h14M131 117h10M133 119h6M411 115h14M413 117h10M415 119h6"/>
<text class="pw" x="255" y="21">+5V</text><text class="pw" x="384" y="21">+5V</text><text class="pw" x="515" y="21">+5V</text>
<text class="pw" x="136" y="128">GND</text><text class="pw" x="418" y="128">GND</text>
<g transform="translate(167,49)"><rect class="bx" width="71" height="35"/><circle cx="4" cy="4" r="1.4" fill="#900"/><path class="pn" d="M-8 8h8M-8 17h8M-8 26h8M71 8h8M71 26h8"/><text class="n" x="-6" y="7">1</text><text class="n" x="-6" y="16">2</text><text class="n k" x="-6" y="25">3</text><text class="n r" x="73" y="7">5</text><text class="n" x="73" y="25">4</text><text class="f" x="3" y="11">INB</text><text class="f" x="3" y="20">INA</text><text class="f k" x="3" y="29">GND</text><text class="f r" x="50" y="11">VCC</text><text class="f" x="45" y="29">OUTY</text><text class="t" x="0" y="-7">AND</text><text class="p" x="30" y="-16">U34</text><text class="p" x="30" y="-7">M74VHC1GT08DTT1G</text></g>
<g transform="translate(308,49)"><rect class="bx" width="71" height="35"/><circle cx="4" cy="4" r="1.4" fill="#900"/><path class="pn" d="M-8 8h8M-8 17h8M-8 26h8M71 8h8M71 26h8"/><text class="n" x="-6" y="7">1</text><text class="n" x="-6" y="16">2</text><text class="n k" x="-6" y="25">3</text><text class="n r" x="73" y="7">5</text><text class="n" x="73" y="25">4</text><text class="f" x="3" y="11">INB</text><text class="f" x="3" y="20">INA</text><text class="f k" x="3" y="29">GND</text><text class="f r" x="50" y="11">VCC</text><text class="f" x="45" y="29">OUTY</text><text class="t" x="-4" y="-7">NOR</text><text class="p" x="20" y="-16">U33</text><text class="p" x="20" y="-7">M74VHC1GT02DTT1G</text></g>
<g transform="translate(430,49)"><rect class="bx" width="71" height="35"/><circle cx="4" cy="4" r="1.4" fill="#900"/><path class="pn" d="M-8 8h8M-8 17h8M-8 26h8M71 8h8M71 26h8"/><text class="n" x="-6" y="7">1</text><text class="n" x="-6" y="16">2</text><text class="n k" x="-6" y="25">3</text><text class="n r" x="73" y="7">5</text><text class="n" x="73" y="25">4</text><text class="f" x="3" y="11">INB</text><text class="f" x="3" y="20">INA</text><text class="f k" x="3" y="29">GND</text><text class="f r" x="50" y="11">VCC</text><text class="f" x="45" y="29">OUTY</text><text class="t" x="0" y="-7">AND</text><text class="p" x="25" y="-16">U32</text><text class="p" x="25" y="-7">M74VHC1GT08DTT1G</text></g>
</g>

<!-- ========== VREF ========== -->
<rect class="ds" x="607" y="41" width="255" height="157"/>
<text class="ti" x="744" y="62">VRef generator</text>
<text class="ti" x="741" y="76">1.25v</text>
<path class="w" d="M651 124V150H698M718 150H766M739 150V106H790M786 150H827V178"/>
<circle class="dt" cx="739" cy="150" r="2"/>
<rect class="bx" x="698" y="147" width="20" height="6"/><rect class="bx" x="766" y="147" width="20" height="6"/>
<text class="p" x="703" y="136">R3</text><text class="p" x="697" y="145">150kΩ</text>
<text class="p" x="770" y="136">R4</text><text class="p" x="768" y="145">50kΩ</text>
<path class="fl" d="M790 106l5-5h14v10h-14z"/><text class="lb" x="810" y="109">VRef</text>
<path class="sy" d="M646 124h10M820 178h14M822 180h10M824 182h6"/>
<text class="pw" x="651" y="121">+5V</text><text class="pw" x="827" y="191">GND</text>

<!-- ========== OUTPUT BOOSTING ========== -->
<rect class="ds" x="607" y="225" width="391" height="333"/>
<text class="ti" x="823" y="243">Output boosting (allow 40mA)</text>
<g transform="translate(684,305)">
<path class="pn" d="M16 -61V-9M16 9V45M-19 0H0M34 -9H52M34 8H52"/><path class="w" d="M16 -50V-35M-19 0H-25V10H-9V22H-13M40 -9H52M40 8H52"/>
<path class="bx" d="M0 0L34 -17V18Z"/><text class="n" x="25" y="-5">+</text><text class="n" x="25" y="12">−</text>
<text class="n" x="-12" y="-2">1</text><text class="n" x="40" y="-11">3</text><text class="n" x="40" y="6">2</text>
<text class="n" transform="translate(10,-27) rotate(90)">4</text><text class="n" transform="translate(10,20) rotate(90)">8</text>
<text class="p" x="-22" y="-46">U35</text><text class="p" x="-22" y="-37">LM358-SR_C280707</text>
<path class="sy" d="M11 -61h10M9 45h14M11 47h10M13 49h6"/><text class="pw" x="16" y="-64">+5V</text><text class="pw" x="16" y="58">GND</text>
<path class="fl" d="M52 -9l5-5h14v10h-14zM52 8l5-5h14v10h-14zM-31 17h14l5 5l-5 5h-14z"/>
<text class="lb" x="73" y="-6">LeverRev1Internal</text><text class="lb" x="73" y="11">VRef</text><text class="lb e" x="-33" y="25">LeverRev1</text>
</g>
<g transform="translate(851,322)">
<path class="pn" d="M16 -61V-9M16 9V45M-19 0H0M34 -9H52M34 8H52"/><path class="w" d="M16 -50V-35M-50 22H-30V0H-19M40 -9H52M40 8H52"/>
<path class="bx" d="M0 0L34 -17V18Z"/><text class="n" x="25" y="-5">+</text><text class="n" x="25" y="12">−</text>
<text class="n" x="-12" y="-2">1</text><text class="n" x="40" y="-11">3</text><text class="n" x="40" y="6">2</text>
<text class="n" transform="translate(10,-27) rotate(90)">4</text><text class="n" transform="translate(10,20) rotate(90)">8</text>
<text class="p" x="-22" y="-46">U36</text><text class="p" x="-22" y="-37">LM358-SR_C280707</text>
<path class="sy" d="M11 -61h10M9 45h14M11 47h10M13 49h6"/><text class="pw" x="16" y="-64">+5V</text><text class="pw" x="16" y="58">GND</text>
<path class="fl" d="M52 -9l5-5h14v10h-14zM52 8l5-5h14v10h-14zM-73 17h14l5 5l-5 5h-14z"/>
<text class="lb" x="73" y="-6">LeverRev2Internal</text><text class="lb" x="73" y="11">VRef</text><text class="lb e" x="-75" y="25">LeverRev2</text>
</g>
<g transform="translate(684,463)">
<path class="pn" d="M16 -61V-9M16 9V45M-19 0H0M34 -9H52M34 8H52"/><path class="w" d="M16 -50V-35M-19 0H-25V10H-9V22H-13M40 -9H52M40 8H52"/>
<path class="bx" d="M0 0L34 -17V18Z"/><text class="n" x="25" y="-5">+</text><text class="n" x="25" y="12">−</text>
<text class="n" x="-12" y="-2">1</text><text class="n" x="40" y="-11">3</text><text class="n" x="40" y="6">2</text>
<text class="n" transform="translate(10,-27) rotate(90)">4</text><text class="n" transform="translate(10,20) rotate(90)">8</text>
<text class="p" x="-22" y="-46">U38</text><text class="p" x="-22" y="-37">LM358-SR_C280707</text>
<path class="sy" d="M11 -61h10M9 45h14M11 47h10M13 49h6"/><text class="pw" x="16" y="-64">+5V</text><text class="pw" x="16" y="58">GND</text>
<path class="fl" d="M52 -9l5-5h14v10h-14zM52 8l5-5h14v10h-14zM-31 17h14l5 5l-5 5h-14z"/>
<text class="lb" x="73" y="-6">LeverRev3Internal</text><text class="lb" x="73" y="11">VRef</text><text class="lb e" x="-33" y="25">LeverRev3</text>
</g>
<g transform="translate(851,480)">
<path class="pn" d="M16 -61V-9M16 9V45M-19 0H0M34 -9H52M34 8H52"/><path class="w" d="M16 -50V-35M-54 22H-36V0H-19M40 -9H52M40 8H52"/>
<path class="bx" d="M0 0L34 -17V18Z"/><text class="n" x="25" y="-5">+</text><text class="n" x="25" y="12">−</text>
<text class="n" x="-12" y="-2">1</text><text class="n" x="40" y="-11">3</text><text class="n" x="40" y="6">2</text>
<text class="n" transform="translate(10,-27) rotate(90)">4</text><text class="n" transform="translate(10,20) rotate(90)">8</text>
<text class="p" x="-22" y="-46">U37</text><text class="p" x="-22" y="-37">LM358-SR_C280707</text>
<path class="sy" d="M11 -61h10M9 45h14M11 47h10M13 49h6"/><text class="pw" x="16" y="-64">+5V</text><text class="pw" x="16" y="58">GND</text>
<path class="fl" d="M52 -9l5-5h14v10h-14zM52 8l5-5h14v10h-14zM-77 17h14l5 5l-5 5h-14z"/>
<text class="lb" x="73" y="-6">LeverRev4Internal</text><text class="lb" x="73" y="11">VRef</text><text class="lb e" x="-79" y="25">LeverRev4</text>
</g>

<!-- ========== LATCHING ========== -->
<rect class="ds" x="638" y="582" width="334" height="197"/>
<text class="ti" x="797" y="604">Latching</text>
<path class="w" d="M745 638H750V652H795M745 656H750V661H795M745 670H795M745 682H768V679H795M745 695H795M745 709H760V706H795M795 688H775V625H880V612M856 652H880V625M795 714H783V740M783 726H880V670H856M856 661H870V651H890M856 670H890M856 688H870V682H890M856 697H890M856 706H906V757M856 714H898V740"/>
<circle class="dt" cx="880" cy="625" r="2"/><circle class="dt" cx="783" cy="726" r="2"/>
<rect class="bx" x="803" y="644" width="45" height="80"/><circle cx="807" cy="648" r="1.4" fill="#900"/>
<path class="pn" d="M795 652h8M795 661h8M795 670h8M795 679h8M795 688h8M795 697h8M795 706h8M795 714h8M848 652h8M848 661h8M848 670h8M848 679h8M848 688h8M848 697h8M848 706h8M848 714h8"/>
<g class="n"><text x="796" y="651">1</text><text x="796" y="660">2</text><text x="796" y="669">3</text><text x="796" y="678">4</text><text x="796" y="687">5</text><text x="796" y="696">6</text><text x="796" y="705">7</text><text x="796" y="713" class="k">8</text>
<text x="806" y="655">4Q</text><text x="806" y="664">1Q</text><text x="806" y="673">1R</text><text x="806" y="682">1S</text><text x="806" y="691">OE</text><text x="806" y="700">2S</text><text x="806" y="709">2R</text><text x="806" y="718" class="k">VSS</text>
<text x="845" y="655" class="e r">VDD</text><text x="845" y="664" class="e">4R</text><text x="845" y="673" class="e">4S</text><text x="845" y="682" class="e">NC</text><text x="845" y="691" class="e">3S</text><text x="845" y="700" class="e">3R</text><text x="845" y="709" class="e">3Q</text><text x="845" y="718" class="e">2Q</text>
<text x="849" y="651" class="r">16</text><text x="849" y="660">15</text><text x="849" y="669">14</text><text x="849" y="678">13</text><text x="849" y="687">12</text><text x="849" y="696">11</text><text x="849" y="705">10</text><text x="849" y="713">9</text></g>
<text class="p" x="818" y="633">U6</text><text class="p" x="818" y="641">HEF4043BT,653</text>
<path class="fl" d="M727 633h14l5 5l-5 5h-14zM727 651h14l5 5l-5 5h-14zM727 664h14l5 5l-5 5h-14zM727 677h14l5 5l-5 5h-14zM727 690h14l5 5l-5 5h-14zM727 703h14l5 5l-5 5h-14zM890 651l5-5h14v10h-14zM890 669l5-5h14v10h-14zM890 682l5-5h14v10h-14zM890 695l5-5h14v10h-14zM874 735h14l5 5l-5 5h-14zM888 752h14l5 5l-5 5h-14z"/>
<g class="lb"><text class="e" x="725" y="641">LeverRev4Internal</text><text class="e" x="725" y="659">LeverRev1Internal</text><text class="e" x="725" y="672">Nor1</text><text class="e" x="725" y="685">Rev1</text><text class="e" x="725" y="698">Rev2</text><text class="e" x="725" y="711">Nor2</text>
<text x="910" y="654">Nor4</text><text x="910" y="672">Rev4</text><text x="910" y="685">Rev3</text><text x="910" y="698">Nor3</text><text class="e" x="872" y="743">LeverRev2Internal</text><text class="e" x="886" y="760">LeverRev3Internal</text></g>
<path class="sy" d="M875 612h10M776 740h14M778 742h10M780 744h6"/><text class="pw" x="880" y="609">+5V</text><text class="pw" x="783" y="758">GND</text>

<!-- ========== INPUT ========== -->
<rect class="ds" x="634" y="793" width="364" height="447"/>
<text class="ti" x="837" y="819">Input</text>
<path class="w" d="M866 832H916V896H929M876 855H910V905H929M876 877H905V914H929M876 899H900V922H929M876 921H895V931H929M876 943H929M876 965H890V949H929M876 987H895V958H929M876 1009H900V967H929M712 851V863H729M712 897V872H729"/>
<path class="sy" d="M862 827V837M705 851h14M707 849h10M709 847h6M707 897h10"/>
<text class="pw" x="851" y="835">+5V</text><text class="pw" x="712" y="842">GND</text><text class="pw" x="712" y="909">+5V</text>
<rect class="bx" x="734" y="858" width="20" height="26"/><circle cx="739" cy="862" r="1.4" fill="#900"/>
<path class="pn" d="M728 863h6M728 872h6"/><text class="n" x="729" y="862">1</text><text class="n" x="729" y="872">2</text><text class="n" x="739" y="868">1</text><text class="n" x="739" y="878">2</text>
<text class="p" x="733" y="848">U3</text><text class="p" x="733" y="856">DB128L-5.08-2P</text>
<rect class="bx" x="934" y="891" width="18" height="88"/><circle cx="938" cy="895" r="1.4" fill="#900"/>
<path class="pn" d="M927 896h7M927 905h7M927 914h7M927 922h7M927 931h7M927 940h7M927 949h7M927 958h7M927 967h7"/>
<g class="n"><text x="928" y="895">1</text><text x="928" y="904">2</text><text x="928" y="913">3</text><text x="928" y="921">4</text><text x="928" y="930">5</text><text x="928" y="939">6</text><text x="928" y="948">7</text><text x="928" y="957">8</text><text x="928" y="966">9</text>
<text x="937" y="901">1</text><text x="937" y="910">2</text><text x="937" y="919">3</text><text x="937" y="927">4</text><text x="937" y="936">5</text><text x="937" y="945">6</text><text x="937" y="954">7</text><text x="937" y="963">8</text><text x="937" y="972">9</text></g>
<text class="p" x="931" y="878">U1</text><text class="p" x="931" y="887">JL128-50009G01</text>
<path class="fl" d="M853 850h14l5 5l-5 5h-14zM853 872h14l5 5l-5 5h-14zM853 894h14l5 5l-5 5h-14zM853 916h14l5 5l-5 5h-14zM853 938h14l5 5l-5 5h-14zM853 960h14l5 5l-5 5h-14zM853 982h14l5 5l-5 5h-14zM853 1004h14l5 5l-5 5h-14z"/>
<g class="lb"><text class="e" x="851" y="858">SetRev1</text><text class="e" x="851" y="880">SetNor1</text><text class="e" x="851" y="902">SetRev2</text><text class="e" x="851" y="924">SetNor2</text><text class="e" x="851" y="946">SetRev3</text><text class="e" x="851" y="968">SetNor3</text><text class="e" x="851" y="990">SetRev4</text><text class="e" x="851" y="1012">SetNor4</text></g>
<!-- U5 -->
<path class="w" d="M723 1021H731V1031H773M723 1039H735V1040H773M723 1056H739V1049H773M723 1079H743V1058H773M723 1096H747V1067H773M723 1113H751V1076H773M723 1136H755V1085H773M723 1153H759V1094H773M723 1171H763V1103H773M723 1188H767V1112H773M723 1206H770V1121H773M723 1223H772V1130H773"/>
<rect class="bx" x="780" y="1026" width="17" height="114"/><circle cx="784" cy="1030" r="1.4" fill="#900"/>
<path class="pn" d="M773 1031h7M773 1040h7M773 1049h7M773 1058h7M773 1067h7M773 1076h7M773 1085h7M773 1094h7M773 1103h7M773 1112h7M773 1121h7M773 1130h7"/>
<g class="n"><text x="773" y="1030">1</text><text x="773" y="1039">2</text><text x="773" y="1048">3</text><text x="773" y="1057">4</text><text x="773" y="1066">5</text><text x="773" y="1075">6</text><text x="773" y="1084">7</text><text x="773" y="1093">8</text><text x="773" y="1102">9</text><text x="768" y="1111">10</text><text x="768" y="1120">11</text><text x="768" y="1129">12</text>
<text x="783" y="1035">1</text><text x="783" y="1044">2</text><text x="783" y="1053">3</text><text x="783" y="1062">4</text><text x="783" y="1071">5</text><text x="783" y="1080">6</text><text x="783" y="1089">7</text><text x="783" y="1098">8</text><text x="783" y="1107">9</text><text x="783" y="1116">10</text><text x="783" y="1125">11</text><text x="783" y="1134">12</text></g>
<text class="p" x="778" y="1015">U5</text><text class="p" x="778" y="1023">DB128V-5.0-12P</text>
<path class="fl" d="M700 1016h14l5 5l-5 5h-14zM700 1034h14l5 5l-5 5h-14zM700 1051h14l5 5l-5 5h-14zM700 1074h14l5 5l-5 5h-14zM700 1091h14l5 5l-5 5h-14zM700 1108h14l5 5l-5 5h-14zM700 1131h14l5 5l-5 5h-14zM700 1148h14l5 5l-5 5h-14zM700 1166h14l5 5l-5 5h-14zM700 1183h14l5 5l-5 5h-14zM700 1201h14l5 5l-5 5h-14zM700 1218h14l5 5l-5 5h-14z"/>
<g class="lb"><text class="e" x="698" y="1024">DisableRev1A</text><text class="e" x="698" y="1042">DisableNor1A</text><text class="e" x="698" y="1059">DisableNor1B</text><text class="e" x="698" y="1082">DisableRev2A</text><text class="e" x="698" y="1099">DisableNor2A</text><text class="e" x="698" y="1116">DisableNor2B</text><text class="e" x="698" y="1139">DisableRev3A</text><text class="e" x="698" y="1156">DisableRev3B</text><text class="e" x="698" y="1174">DisableNor3A</text><text class="e" x="698" y="1191">DisableRev4A</text><text class="e" x="698" y="1209">DisableRev4B</text><text class="e" x="698" y="1226">DisableNor4A</text></g>
<!-- U4 -->
<path class="w" d="M876 1030H915V1041H930M876 1048H912V1050H930M876 1065H909V1059H930M876 1087H906V1068H930M876 1105H912V1077H930M876 1122H915V1086H930M876 1144H918V1095H930M876 1162H920V1104H930M876 1179H922V1113H930M876 1197H924V1122H930M876 1215H926V1131H930M876 1232H928V1140H930"/>
<rect class="bx" x="937" y="1036" width="18" height="112"/><circle cx="941" cy="1040" r="1.4" fill="#900"/>
<path class="pn" d="M930 1041h7M930 1050h7M930 1059h7M930 1068h7M930 1077h7M930 1086h7M930 1095h7M930 1104h7M930 1113h7M930 1122h7M930 1131h7M930 1140h7"/>
<g class="n"><text x="931" y="1040">1</text><text x="931" y="1049">2</text><text x="931" y="1058">3</text><text x="931" y="1067">4</text><text x="931" y="1076">5</text><text x="931" y="1085">6</text><text x="931" y="1094">7</text><text x="931" y="1103">8</text><text x="931" y="1112">9</text><text x="926" y="1121">10</text><text x="926" y="1130">11</text><text x="926" y="1139">12</text>
<text x="940" y="1045">1</text><text x="940" y="1054">2</text><text x="940" y="1063">3</text><text x="940" y="1072">4</text><text x="940" y="1081">5</text><text x="940" y="1090">6</text><text x="940" y="1099">7</text><text x="940" y="1108">8</text><text x="940" y="1117">9</text><text x="940" y="1126">10</text><text x="940" y="1135">11</text><text x="940" y="1144">12</text></g>
<text class="p" x="936" y="1025">U4</text><text class="p" x="936" y="1033">DB128V-5.0-12P</text>
<path class="fl" d="M853 1025h14l5 5l-5 5h-14zM853 1043h14l5 5l-5 5h-14zM853 1060h14l5 5l-5 5h-14zM853 1082h14l5 5l-5 5h-14zM853 1100h14l5 5l-5 5h-14zM853 1117h14l5 5l-5 5h-14zM853 1139h14l5 5l-5 5h-14zM853 1157h14l5 5l-5 5h-14zM853 1174h14l5 5l-5 5h-14zM853 1192h14l5 5l-5 5h-14zM853 1210h14l5 5l-5 5h-14zM853 1227h14l5 5l-5 5h-14z"/>
<g class="lb"><text class="e" x="851" y="1033">EnableRev1A</text><text class="e" x="851" y="1051">EnableRev1B</text><text class="e" x="851" y="1068">EnableNor1A</text><text class="e" x="851" y="1090">EnableRev2A</text><text class="e" x="851" y="1108">EnableRev2B</text><text class="e" x="851" y="1125">EnableNor2A</text><text class="e" x="851" y="1147">EnableRev3A</text><text class="e" x="851" y="1165">EnableNor3A</text><text class="e" x="851" y="1182">EnableNor3B</text><text class="e" x="851" y="1200">EnableRev4A</text><text class="e" x="851" y="1218">EnableNor4A</text><text class="e" x="851" y="1235">EnableNor4B</text></g>

<!-- ========== POWER INDICATOR ========== -->
<rect class="ds" x="603" y="1255" width="141" height="210"/>
<text class="ti" x="672" y="1272">Power indicator</text>
<path class="w" d="M682 1313V1290H706M682 1333V1356M682 1376V1403M682 1420V1447H656"/>
<path class="pn" d="M682 1313V1305M682 1333V1340M682 1376V1382"/>
<path class="sy" d="M706 1285V1295M652 1440V1454M650 1442V1452M648 1444V1450"/>
<text class="pw" x="720" y="1293">+5V</text><text class="pw" x="632" y="1450">GND</text>
<rect class="bx" x="678" y="1313" width="8" height="20"/><rect class="bx" x="678" y="1356" width="8" height="20"/>
<text class="p" x="688" y="1324">R20</text><text class="p" x="688" y="1332">240Ω</text>
<text class="p" x="688" y="1367">R19</text><text class="p" x="688" y="1375">400Ω</text>
<path d="M675 1410h14l-7 9z" fill="#e00" stroke="#c00"/><path d="M675 1419h14" stroke="#c00"/>
<path d="M672 1420l-4 4M668 1426l-4 4" stroke="#c00" stroke-width="1.5"/>
<text class="p" x="691" y="1416">LED1</text><text class="p" x="691" y="1424">SZYY1206G</text>

<!-- ========== OUTPUT ========== -->
<rect class="ds" x="749" y="1321" width="245" height="149"/>
<text class="ti" x="855" y="1339">Output</text>
<path class="w" d="M832 1364H882V1402H928M832 1382H867V1411H928M832 1400H852V1420H928M832 1418H838V1429H928M825 1447H838V1438H928"/>
<path class="fl" d="M809 1359h14l5 5l-5 5h-14zM809 1377h14l5 5l-5 5h-14zM809 1395h14l5 5l-5 5h-14zM809 1413h14l5 5l-5 5h-14z"/>
<g class="lb"><text class="e" x="807" y="1367">LeverRev1</text><text class="e" x="807" y="1385">LeverRev2</text><text class="e" x="807" y="1403">LeverRev3</text><text class="e" x="807" y="1421">LeverRev4</text></g>
<path class="sy" d="M818 1440V1454M816 1442V1452M814 1444V1450"/><text class="pw" x="800" y="1450">GND</text>
<rect class="bx" x="934" y="1397" width="18" height="50"/><circle cx="938" cy="1401" r="1.4" fill="#900"/>
<path class="pn" d="M927 1402h7M927 1411h7M927 1420h7M927 1429h7M927 1438h7"/>
<g class="n"><text x="928" y="1401">1</text><text x="928" y="1410">2</text><text x="928" y="1419">3</text><text x="928" y="1428">4</text><text x="928" y="1437">5</text>
<text x="937" y="1406">1</text><text x="937" y="1415">2</text><text x="937" y="1424">3</text><text x="937" y="1433">4</text><text x="937" y="1442">5</text></g>
<text class="p" x="932" y="1386">U2</text><text class="p" x="932" y="1394">DB128V-5.0-5P</text>

<!-- ========== TITLE BLOCK ========== -->
<rect class="fr" x="621" y="1481" width="390" height="71"/>
<path class="fr" d="M621 1515H1011M713 1534H1011M942 1481V1534M713 1515V1552"/>
<text class="tb" x="625" y="1492">TITLE:</text>
<text class="tv" x="675" y="1503" style="font-size:11.5px">Quad latching points interlock</text>
<text class="tb" x="946" y="1504">REV:</text><text class="tv" x="979" y="1504">1.1</text>
<text class="tb" x="717" y="1527">Company:</text><text class="tv" x="776" y="1527">LU-MOD</text>
<text class="tb" x="946" y="1528">Sheet:</text><text class="tv" x="985" y="1528">1/1</text>
<text class="tb" x="717" y="1546">Date:</text><text class="tv" x="758" y="1546">31 Dec. 2023</text>
<text class="tb" x="838" y="1546">Drawn By:</text><text class="tv" x="897" y="1546">James E. Petts</text>
<path d="M629 1538a4 4 0 0 1 2-7a6 6 0 0 1 11-1a4 4 0 0 1 1 8h-9" fill="none" stroke="#4a90e2" stroke-width="1.8"/>
<text x="648" y="1538" style="font-size:12px;font-weight:bold;font-style:italic;fill:#4a90e2">EasyEDA</text>
</svg>
</body></html>
